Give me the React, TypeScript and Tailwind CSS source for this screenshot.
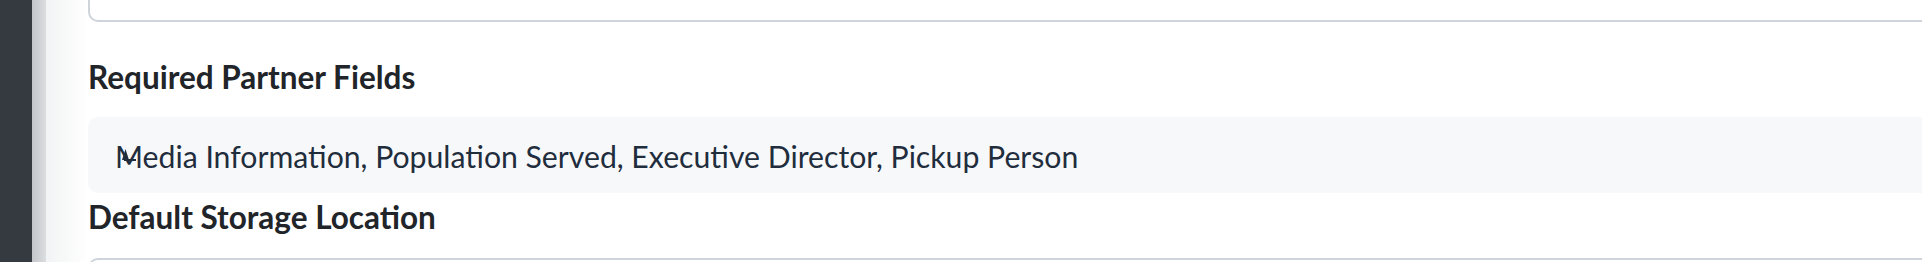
import React from "react";

const fields = [
  "Media Information",
  "Population Served",
  "Executive Director",
  "Pickup Person",
];

function Heading({ children }: { children: React.ReactNode }) {
  return (
    <h3 className="text-[31.5px] leading-[38px] font-bold text-[#212529] whitespace-nowrap">
      {children}
    </h3>
  );
}

export default function App() {
  return (
    <div
      className="flex h-[262px] w-[1922px] overflow-hidden bg-white"
      style={{ fontFamily: "Lato, 'Noto Sans', sans-serif" }}
    >
      {/* sidebar edge + content shadow */}
      <div className="w-[32px] shrink-0 bg-[#343a40]" />
      <div className="w-[14px] shrink-0 bg-gradient-to-r from-[#c3c6ca] to-[#dcdee0]" />
      <div className="w-[42px] shrink-0 bg-gradient-to-r from-[#f2f3f4] to-white" />

      <div className="w-[1900px] shrink-0">
        <div className="h-[22px] rounded-b-[10px] border-2 border-t-0 border-[#ced4da]" />

        <div className="mt-[36px]">
          <Heading>Required Partner Fields</Heading>
        </div>

        <div className="mt-[21px] h-[76px] rounded-[10px] bg-[#f7f8fa] px-[27px] pt-[21px] pb-[19px]">
          <div className="relative text-[30.2px] leading-[36px] text-[#1f2d3d] whitespace-nowrap">
            {fields.join(", ")}
            <svg
              className="absolute left-[2px] top-[9px]"
              width="20"
              height="16"
              viewBox="0 0 20 16"
            >
              <path d="M5 13 L8.5 2 L12 13 Z" fill="#1f2d3d" />
              <path d="M7 13 H19" stroke="#1f2d3d" strokeWidth="2" />
            </svg>
          </div>
        </div>

        <div className="mt-[5px]">
          <Heading>Default Storage Location</Heading>
        </div>

        <div className="mt-[22px] h-[40px] rounded-t-[10px] border-2 border-b-0 border-[#ced4da]" />
      </div>
    </div>
  );
}
